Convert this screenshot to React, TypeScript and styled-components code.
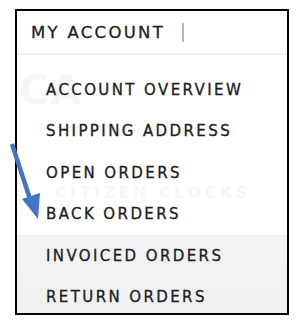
import React from 'react';
import styled, { createGlobalStyle } from 'styled-components';

const GlobalStyle = createGlobalStyle`
  html, body {
    margin: 0;
    padding: 0;
    background: #ffffff;
  }
  * {
    box-sizing: border-box;
  }
`;

const StyledPage = styled.div`
  position: relative;
  width: 301px;
  height: 325px;
  padding: 9px 0 0 15px;
  font-family: 'DejaVu Sans', 'Open Sans', sans-serif;
`;

const StyledFrame = styled.div`
  width: 274px;
  height: 306px;
  border: 2px solid #000;
  display: flex;
  flex-direction: column;
  overflow: hidden;
`;

const StyledHeader = styled.div`
  height: 44px;
  display: flex;
  align-items: center;
  padding-left: 14px;
  border-bottom: 2px solid #efefef;
  flex-shrink: 0;

  .title {
    font-size: 16.5px;
    letter-spacing: 2.3px;
    color: #1c1c24;
    -webkit-text-stroke: 0.3px #1c1c24;
  }
  .divider {
    width: 2px;
    height: 19px;
    background: #b8b8b8;
    margin-left: 17px;
  }
`;

const StyledMenu = styled.ul`
  position: relative;
  flex: 1;
  margin: 0;
  padding: 14px 0 0 29px;
  list-style: none;
  background: linear-gradient(
    to bottom,
    #ffffff 0,
    #ffffff 180px,
    #f3f3f3 180px,
    #f1f1f1 100%
  );

  .ghost {
    position: absolute;
    color: #f6f6f6;
    font-weight: 700;
    pointer-events: none;
  }
  .ghost-ca {
    left: 2px;
    top: 12px;
    font-size: 40px;
    letter-spacing: 2px;
  }
  .ghost-citizen {
    left: 38px;
    top: 128px;
    font-size: 16px;
    letter-spacing: 3.5px;
  }
`;

const StyledItem = styled.li`
  position: relative;
  height: 41.5px;
  display: flex;
  align-items: center;
  font-size: 15px;
  letter-spacing: 2.4px;
  color: #1c1c24;
  -webkit-text-stroke: 0.3px #1c1c24;
`;

const StyledArrow = styled.svg`
  position: absolute;
  left: 0;
  top: 0;
  pointer-events: none;
`;

const items = [
  'ACCOUNT OVERVIEW',
  'SHIPPING ADDRESS',
  'OPEN ORDERS',
  'BACK ORDERS',
  'INVOICED ORDERS',
  'RETURN ORDERS',
];

function App() {
  return (
    <>
      <GlobalStyle />
      <StyledPage>
        <StyledFrame>
          <StyledHeader>
            <span className="title">MY ACCOUNT</span>
            <span className="divider" />
          </StyledHeader>
          <StyledMenu>
            <span className="ghost ghost-ca">CA</span>
            <span className="ghost ghost-citizen">CITIZEN CLOCKS</span>
            {items.map((item) => (
              <StyledItem key={item}>{item}</StyledItem>
            ))}
          </StyledMenu>
        </StyledFrame>
        <StyledArrow width="301" height="325" viewBox="0 0 301 325">
          <line x1="12" y1="144" x2="30" y2="199" stroke="#4472c4" strokeWidth="4.5" />
          <polygon points="22,199 40,193 38,219" fill="#4472c4" />
        </StyledArrow>
      </StyledPage>
    </>
  );
}

export default App;
